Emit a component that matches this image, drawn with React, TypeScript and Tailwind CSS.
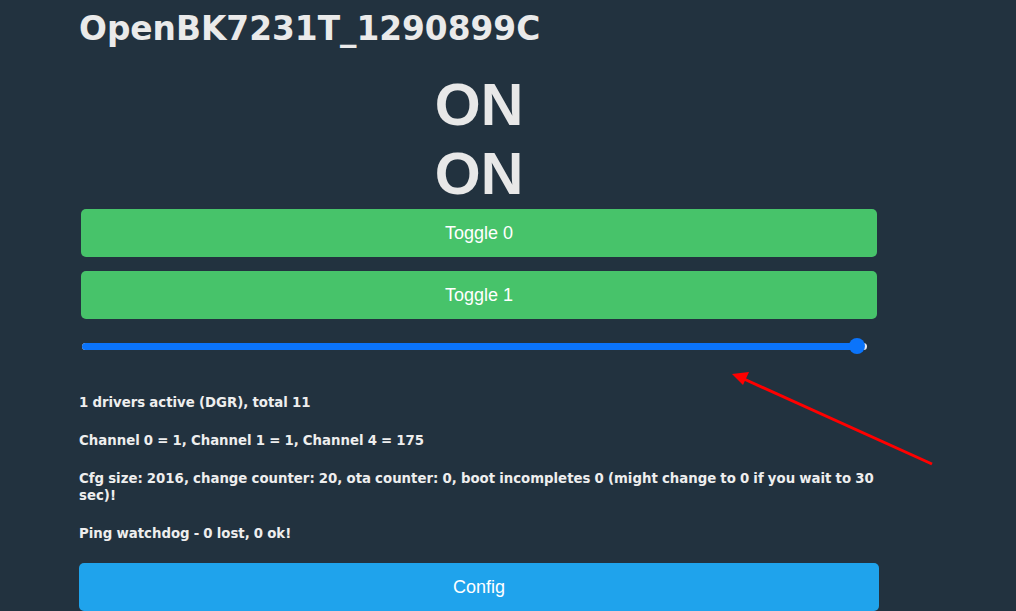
import { useState } from 'react';

const info = [
    '1 drivers active (DGR), total 11',
    'Channel 0 = 1, Channel 1 = 1, Channel 4 = 175',
    'Cfg size: 2016, change counter: 20, ota counter: 0, boot incompletes 0 (might change to 0 if you wait to 30 sec)!',
    'Ping watchdog - 0 lost, 0 ok!',
];

export default function App() {
    const [states, setStates] = useState([true, true]);

    function toggle(idx: number) {
        setStates((s) => s.map((v, i) => (i === idx ? !v : v)));
    }

    return (
        <div className="relative min-h-[611px] h-[611px] overflow-hidden bg-[#22323f] text-[#eaeaea]">
            <div className="w-[800px] ml-[79px]">
                {/* Title */}
                <h1 className="pt-[10px] text-[32.8px] leading-[38px] font-bold font-['DejaVu_Sans',sans-serif] text-[#eaeaea]">
                    OpenBK7231T_1290899C
                </h1>

                {/* Relay states */}
                <div className="mt-[23px] flex flex-col items-center font-['Liberation_Sans',Arial,sans-serif] font-bold text-[59px] leading-[69px] text-[#e8e8e8]">
                    {states.map((on, i) => (
                        <div key={i}>{on ? 'ON' : 'OFF'}</div>
                    ))}
                </div>

                {/* Toggle buttons */}
                <div className="px-[2px] flex flex-col gap-[14px]">
                    {[0, 1].map((i) => (
                        <button
                            key={i}
                            onClick={() => toggle(i)}
                            className="h-12 w-full rounded-[5px] bg-[#47c36a] text-white text-[18px] font-['Liberation_Sans',Arial,sans-serif]"
                        >
                            Toggle {i}
                        </button>
                    ))}
                </div>

                {/* Dimmer slider */}
                <div className="relative mt-[23px] ml-[3px] w-[785px] h-[8px] flex items-center">
                    <div className="h-[7px] w-full rounded-full bg-[#e9e9ed]" />
                    <div className="absolute left-0 top-[0.5px] h-[7px] w-[778px] rounded-full bg-[#0b74fb]" />
                    <div className="absolute left-[767px] -top-[4px] w-[16px] h-[16px] rounded-full bg-[#0b74fb]" />
                </div>

                {/* Info */}
                <div className="mt-[44px] font-['DejaVu_Sans',sans-serif] font-bold text-[13.3px] leading-[17px] [word-spacing:-0.5px] text-[#eeeeee] flex flex-col gap-[21px]">
                    {info.map((t) => (
                        <p key={t}>{t}</p>
                    ))}
                </div>

                {/* Config */}
                <button className="mt-[21px] h-12 w-full rounded-[5px] bg-[#1fa3ec] text-white text-[18px] font-['Liberation_Sans',Arial,sans-serif]">
                    Config
                </button>
            </div>

            {/* Annotation arrow */}
            <svg className="absolute inset-0 pointer-events-none" width="1016" height="611">
                <line x1="932" y1="464" x2="744" y2="379" stroke="#ff0000" strokeWidth="3" />
                <polygon points="732,374 749,372 743,385" fill="#ff0000" />
            </svg>
        </div>
    );
}
